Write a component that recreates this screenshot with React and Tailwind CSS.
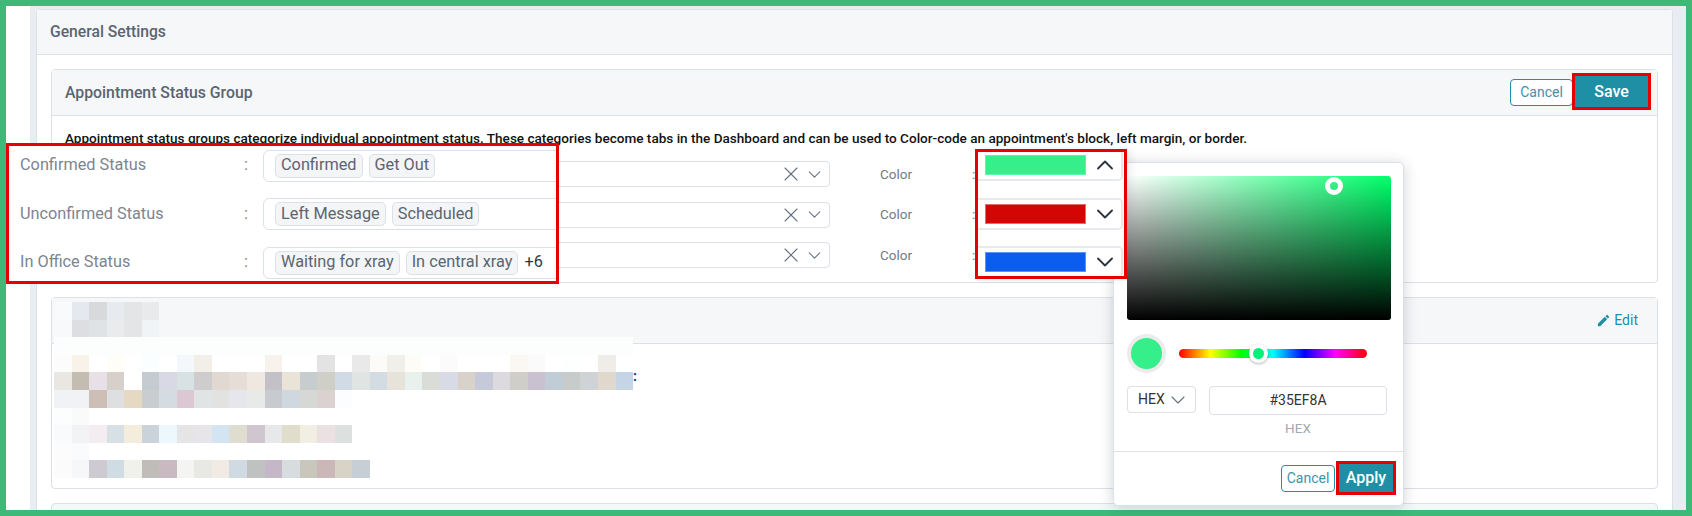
import React from 'react';
import { X, ChevronDown, ChevronUp } from 'lucide-react';
import { MdEdit } from 'react-icons/md';

const rows = [
  { label: 'Confirmed Status', chips: ['Confirmed', 'Get Out'], color: 'bg-[#35ef8a]', edge: 'border-[#5ff3a3]' },
  { label: 'Unconfirmed Status', chips: ['Left Message', 'Scheduled'], color: 'bg-[#d40505]', edge: 'border-[#e56a6a]' },
  { label: 'In Office Status', chips: ['Waiting for xray', 'In central xray'], more: '+6', color: 'bg-[#0b5ded]', edge: 'border-[#5b93f3]' },
];

// blurred part of the screenshot, one entry per mosaic cell
const mosaic = [
  ['f9fafb', 'e3e9ee', 'd8d9db', 'e7ebef', 'e4e5e7', 'e9eaec'],
  ['f8f9fa', 'dcdee1', 'dfe3e6', 'eaebec', 'e4e5e7', 'f1f4f7'],
  Array(33).fill('fcfefd'),
  ['fdfcfc', 'f8f2e8', 'ffffff', 'fffdf8', 'ffffff', 'fbfeff', 'ffffff', 'f4f8fc', 'f2efe9', 'ffffff', 'ffffff', 'ffffff', 'f7f2eb', 'ffffff', 'ffffff', 'e3e3e3', 'ffffff', 'e9e9ea', 'fcfbf8', 'f0efe9', 'fdfcf7', 'ffffff', 'fcfbfb', 'ffffff', 'ffffff', 'ffffff', 'fbf8f4', 'fbfafa', 'ffffff', 'fdfefe', 'ffffff', 'f0ede8', 'ffffff'],
  ['eae7e3', 'c2bdb0', 'e8e0e7', 'd7d0ca', 'ffffff', 'c4ccd2', 'd8d9e5', 'd9e2e3', 'cfcccd', 'e1d8d2', 'e6ddd7', 'eee8e1', 'c4c0c8', 'eae3d7', 'c7cccf', 'cfcfc8', 'd0dbe5', 'e0e4e2', 'd3dce2', 'e7e2da', 'e9f1ef', 'dadcd8', 'd8dbe5', 'd8d2cb', 'c6c9da', 'dcdade', 'cfcec9', 'c9c0d0', 'c0cdd6', 'c7cbc9', 'cfd3d5', 'e0d8cd', 'c6d5e6'],
  ['f1f2f5', 'f1f2f5', 'cdbfb6', 'dedfe0', 'e6d9c3', 'c9cdd0', 'd4dce2', 'dcc8d2', 'e1e4e5', 'e2e3e0', 'e5e7ec', 'e8eae8', 'c7cacf', 'd0d8df', 'd5d8d4', 'dcd1d1', 'fbfdfe'],
  ['fcfdfd', 'fafafb'],
  ['f9fafc', 'f2f3f4', 'f3ecf0', 'd7e0e5', 'f4edde', 'cbd3da', 'edf8fd', 'e5e5e6', 'e7e4ea', 'd3e5f3', 'dfdcd0', 'cfc6cf', 'e6e8ea', 'e0ddcd', 'f1efe3', 'ebe1e2', 'dce1df'],
  ['fcfcfd', 'fafbfc'],
  ['fbfbfc', 'f6f7f8', 'cdcad2', 'cfdce4', 'f0f1eb', 'c0bcba', 'c9b9c0', 'f4f5f3', 'e8e8e4', 'f1ebe3', 'cfdae2', 'bfc2c0', 'c5b7c8', 'd7dcdf', 'c9c6bc', 'cbb6b8', 'd7d3c7', 'c7cfd6'],
];

const App = () => {
  return (
    <div className="relative w-[1692px] h-[516px] overflow-hidden bg-[#3fb978] p-[6px] font-['Roboto',sans-serif]">
      <div className="h-[504px] w-[1680px] bg-white pl-[24px] overflow-hidden">
        <div className="h-full bg-[#e9edf1] pl-[6px] pr-[13px] pt-[3px]">
          {/* General Settings */}
          <div className="h-[600px] rounded-t-[4px] border border-[#dce1e8] bg-white">
            <div className="h-[45px] flex items-center px-[13px] bg-[#f6f7f9] border-b border-[#dce1e8] text-[15.7px] font-medium text-[#5b6570]">
              General Settings
            </div>
            <div className="pl-[14px] pr-[14px] pt-[14px] flex flex-col gap-[14px]">
              {/* Appointment Status Group */}
              <div className="h-[214px] rounded-[4px] border border-[#dce1e8] bg-white">
                <div className="h-[46px] flex items-center justify-between pl-[13px] pr-[7px] bg-[#f6f7f9] border-b border-[#dce1e8]">
                  <span className="text-[15.8px] font-medium text-[#5b6570]">Appointment Status Group</span>
                  <button className="w-[63px] h-[27px] mr-[77px] rounded-[4px] border border-[#1f8fa5] bg-white text-[14px] text-[#3f93a8]">Cancel</button>
                </div>
                <div className="px-[13px]">
                  <p className="pt-[14px] h-[33px] text-[13.56px] leading-[16px] font-medium text-[#111] whitespace-nowrap">
                    Appointment status groups categorize individual appointment status. These categories become tabs in the Dashboard and can be used to Color-code an appointment's block, left margin, or border.
                  </p>
                  <div className="flex flex-col gap-[14.5px] pt-[12px]">
                    {rows.map((r) => (
                      <div key={r.label} className="flex items-center h-[26px]">
                        <div className="ml-[216px] w-[549px] h-[26px] flex items-center justify-end gap-[1px] pr-[4px] rounded-[4px] border border-[#dce1e8] text-[#66727f]">
                          <X size={24} strokeWidth={1.1} />
                          <ChevronDown size={21} strokeWidth={1.2} />
                        </div>
                        <span className="ml-[50px] text-[13.5px] text-[#727b85]">Color</span>
                        <span className="ml-[60px] text-[13.5px] text-[#727b85]">:</span>
                      </div>
                    ))}
                  </div>
                </div>
              </div>

              {/* blurred card */}
              <div className="h-[192px] rounded-[4px] border border-[#dce1e8] bg-white">
                <div className="h-[46px] flex items-center justify-end pr-[19px] gap-[3px] bg-[#f6f7f9] border-b border-[#dce1e8] text-[14px] text-[#1f8fa5]">
                  <MdEdit size={15} />
                  <span>Edit</span>
                </div>
              </div>

              {/* next card, cut off by the window */}
              <div className="h-[60px] rounded-t-[4px] border border-[#dce1e8] bg-[#f6f7f9]" />
            </div>
          </div>
        </div>
      </div>

      {/* pixelated text */}
      <div className="absolute left-[54px] top-[302px] grid grid-cols-[repeat(33,17.55px)] auto-rows-[17.6px]">
        {mosaic.flatMap((row, y) =>
          Array.from({ length: 33 }, (_, x) => (
            <div key={`${y}-${x}`} style={{ backgroundColor: row[x] ? `#${row[x]}` : 'transparent' }} />
          ))
        )}
      </div>
      <span className="absolute left-[633px] top-[368px] text-[14px] leading-[16px] font-bold text-[#0b3d78]">:</span>

      {/* red callout: status rows */}
      <div className="absolute left-[6px] top-[143px] w-[553px] h-[141px] border-[3px] border-[#e60000] bg-white overflow-hidden flex flex-col gap-[16.5px] pt-[3.5px] text-[16.3px]">
        {rows.map((r) => (
          <div key={r.label} className="flex items-center h-[32px] shrink-0 pl-[11px]">
            <span className="w-[224px] shrink-0 text-[#7c8590] whitespace-nowrap">{r.label}</span>
            <span className="w-[19px] shrink-0 text-[#7c8590]">:</span>
            <div className="w-[320px] h-[32px] shrink-0 flex items-center gap-[6px] pl-[11px] rounded-[6px] border border-[#dce1e8] text-[#5b6570]">
              {r.chips.map((c) => (
                <span key={c} className="h-[24px] flex items-center px-[5px] rounded-[5px] border border-[#dce1e8] bg-[#f3f5f7] whitespace-nowrap">{c}</span>
              ))}
              {r.more && <span className="text-[#333a42]">{r.more}</span>}
            </div>
          </div>
        ))}
      </div>

      {/* popover with colour picker */}
      <div className="absolute left-[1113px] top-[162px] w-[291px] h-[344px] rounded-[5px] border border-[#dce1e8] bg-white shadow-[0_2px_14px_rgba(40,50,60,0.22)] flex flex-col">
        <div className="flex-1 pl-[13px] pr-[12px] pt-[13px]">
          <div className="relative w-[264px] h-[144px] rounded-[3px] overflow-hidden bg-[linear-gradient(to_right,#fff,#00ff6a)]">
            <div className="absolute inset-0 bg-[linear-gradient(to_top,#000,transparent)]" />
            <div className="absolute left-[198px] top-[1px] w-[18px] h-[18px] rounded-full border-[5px] border-white bg-transparent" />
          </div>
          <div className="flex items-center mt-[14px] h-[39px]">
            <div className="w-[39px] h-[39px] rounded-full bg-[#35ef8a] border-[4px] border-[#ececec]" />
            <div className="relative ml-[13px] w-[188px] h-[9px] rounded-full bg-[linear-gradient(to_right,#f00,#ff0,#0f0,#0ff,#00f,#f0f,#f00)]">
              <div className="absolute left-[70px] top-[-5px] w-[19px] h-[19px] rounded-full bg-[#00f07a] border-[4px] border-white shadow-[0_1px_3px_rgba(0,0,0,0.3)]" />
            </div>
          </div>
          <div className="flex gap-[13px] mt-[13px]">
            <div className="w-[69px] h-[27px] flex items-center justify-between pl-[10px] pr-[5px] rounded-[4px] border border-[#dce1e8] text-[14px] text-[#333]">
              HEX
              <ChevronDown size={24} strokeWidth={1.1} className="text-[#66727f]" />
            </div>
            <div className="flex flex-col w-[178px]">
              <div className="h-[29px] flex items-center justify-center rounded-[4px] border border-[#dce1e8] text-[14px] text-[#333]">#35EF8A</div>
              <span className="mt-[5px] text-center text-[13.5px] leading-[16px] text-[#a0a8b2]">HEX</span>
            </div>
          </div>
        </div>
        <div className="h-[54px] shrink-0 border-t border-[#dce1e8] flex justify-end pt-[13px] pr-[68px]">
          <button className="w-[54px] h-[27px] rounded-[4px] border border-[#1f8fa5] bg-white text-[14px] text-[#3f93a8]">Cancel</button>
        </div>
      </div>

      {/* red callout: colour swatches */}
      <div className="absolute left-[975px] top-[149px] w-[152px] h-[130px] border-[3px] border-[#e60000] bg-white overflow-hidden flex flex-col gap-[16.5px] shadow-[4px_0_8px_rgba(40,50,60,0.08)]">
        {rows.map((r, i) => (
          <div key={r.label} className="-ml-[8px] first:-mt-[3px] w-[153px] h-[32px] shrink-0 flex items-center pl-[13px] rounded-[5px] border-2 border-[#e6e9ee]">
            <div className={`w-[101px] h-[20px] shrink-0 border ${r.color} ${r.edge}`} />
            <div className="ml-[5px] text-[#2b3440]">
              {i === 0 ? <ChevronUp size={28} strokeWidth={1.6} /> : <ChevronDown size={28} strokeWidth={1.6} />}
            </div>
          </div>
        ))}
      </div>

      {/* red callouts: Save and Apply */}
      <button className="absolute left-[1572px] top-[73px] w-[79px] h-[37px] border-[3px] border-[#e60000] bg-[#1f8fa5] text-[16px] font-medium text-white">Save</button>
      <button className="absolute left-[1336px] top-[461px] w-[60px] h-[34px] border-[3px] border-[#e60000] bg-[#1f8fa5] text-[16px] font-medium text-white">Apply</button>
    </div>
  );
};

export default App;
